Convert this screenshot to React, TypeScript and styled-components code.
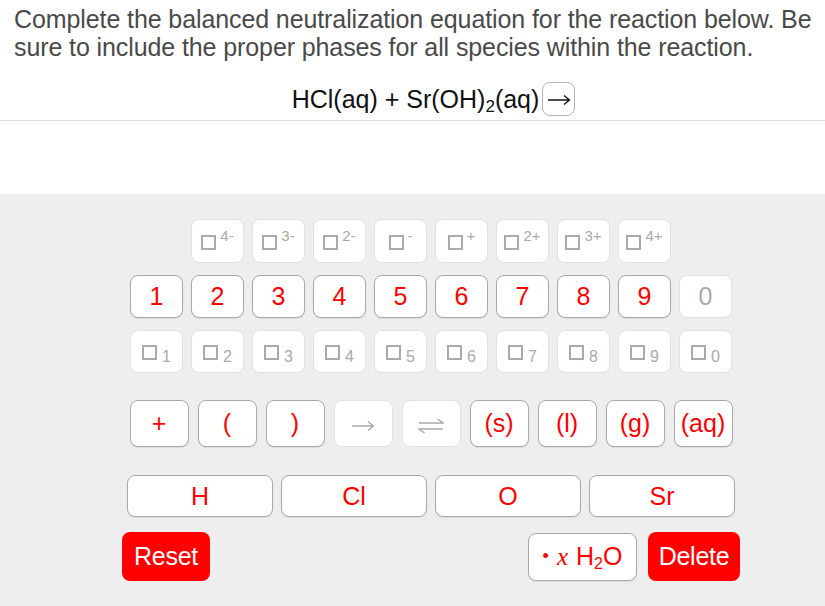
import React from "react";
import styled, { createGlobalStyle, css } from "styled-components";

const GlobalStyle = createGlobalStyle`
  html, body {
    margin: 0;
    padding: 0;
    background: #ffffff;
    font-family: "Liberation Sans", Arial, sans-serif;
  }
`;

const charges = ["4-", "3-", "2-", "-", "+", "2+", "3+", "4+"];
const digits = ["1", "2", "3", "4", "5", "6", "7", "8", "9", "0"];
const subs = ["1", "2", "3", "4", "5", "6", "7", "8", "9", "0"];
const elements = ["H", "Cl", "O", "Sr"];

const RightArrow = ({ color }: { color: string }) => (
  <svg width="24" height="12" viewBox="0 0 24 12" fill="none">
    <path d="M1 6 H22.5 M17 1.5 L22.5 6 L17 10.5" stroke={color} strokeWidth="1.4" />
  </svg>
);

const Equilibrium = () => (
  <svg width="26" height="16" viewBox="0 0 26 16" fill="none">
    <path d="M1 5 H25 L19.5 1" stroke="#aaaaaa" strokeWidth="1.4" />
    <path d="M25 11 H1 L6.5 15" stroke="#aaaaaa" strokeWidth="1.4" />
  </svg>
);

export default function App() {
  return (
    <>
      <GlobalStyle />
      <Page>
        <Header>
          <Prompt>
            Complete the balanced neutralization equation for the reaction below. Be
            sure to include the proper phases for all species within the reaction.
          </Prompt>
          <Equation>
            <span>
              HCl(aq) + Sr(OH)<EqSub>2</EqSub>(aq)
            </span>
            <ArrowBox>
              <RightArrow color="#111111" />
            </ArrowBox>
          </Equation>
        </Header>
        <Spacer />
        <Panel>
          <Keypad>
            <Row $gap={8}>
              {charges.map((c) => (
                <Key key={c} $w={53} $h={44} $off>
                  <Blank />
                  <Sup>{c}</Sup>
                </Key>
              ))}
            </Row>
            <Row $gap={8}>
              {digits.map((d) => (
                <Key key={d} $w={53} $h={43} $off={d === "0"}>
                  {d}
                </Key>
              ))}
            </Row>
            <Row $gap={8}>
              {subs.map((s) => (
                <Key key={s} $w={53} $h={43} $off>
                  <Blank />
                  <Sub>{s}</Sub>
                </Key>
              ))}
            </Row>
            <Row $gap={9} $top={27}>
              <Key $w={59} $h={47}>+</Key>
              <Key $w={59} $h={47}>(</Key>
              <Key $w={59} $h={47}>)</Key>
              <Key $w={59} $h={47} $off>
                <IconSlot>
                  <RightArrow color="#aaaaaa" />
                </IconSlot>
              </Key>
              <Key $w={59} $h={47} $off>
                <IconSlot>
                  <Equilibrium />
                </IconSlot>
              </Key>
              <Key $w={59} $h={47}>(s)</Key>
              <Key $w={59} $h={47}>(l)</Key>
              <Key $w={59} $h={47}>(g)</Key>
              <Key $w={59} $h={47}>(aq)</Key>
            </Row>
            <Row $gap={8} $top={28}>
              {elements.map((e) => (
                <Key key={e} $w={146} $h={42}>
                  {e}
                </Key>
              ))}
            </Row>
            <ActionRow>
              <RedButton $w={88}>Reset</RedButton>
              <RightGroup>
                <Key $w={109} $h={48}>
                  <Dot>•</Dot>
                  <Italic>x</Italic>
                  <span>
                    H<SmallSub>2</SmallSub>O
                  </span>
                </Key>
                <RedButton $w={92}>Delete</RedButton>
              </RightGroup>
            </ActionRow>
          </Keypad>
        </Panel>
      </Page>
    </>
  );
}

const Page = styled.div`
  width: 825px;
  height: 606px;
  display: flex;
  flex-direction: column;
  overflow: hidden;
`;

const Header = styled.div`
  border-bottom: 1px solid #dcdcdc;
  padding: 5px 0 4px 14px;
`;

const Prompt = styled.p`
  margin: 0;
  font-size: 25px;
  line-height: 28px;
  letter-spacing: -0.1px;
  color: #4a4a4a;
  width: 811px;
`;

const Equation = styled.div`
  display: flex;
  align-items: center;
  justify-content: center;
  margin-top: 21px;
  padding-left: 28px;
  font-size: 25px;
  color: #111;
  gap: 3px;
`;

const EqSub = styled.sub`
  font-size: 17px;
  vertical-align: -4px;
  line-height: 0;
`;

const ArrowBox = styled.span`
  display: inline-flex;
  align-items: center;
  justify-content: center;
  width: 33px;
  height: 34px;
  border: 1px solid #b5b5b5;
  border-radius: 8px;
  box-sizing: border-box;
  padding-top: 2px;
`;

const Spacer = styled.div`
  height: 73px;
`;

const Panel = styled.div`
  flex: 1;
  background: #eeeeee;
  padding-top: 25px;
`;

const Keypad = styled.div`
  width: 618px;
  margin-left: 122px;
  display: flex;
  flex-direction: column;
  gap: 12px;
`;

const Row = styled.div<{ $gap: number; $top?: number }>`
  display: flex;
  justify-content: center;
  gap: ${({ $gap }) => $gap}px;
  margin-top: ${({ $top }) => ($top ? $top - 12 : 0)}px;
`;

const Key = styled.div<{ $w: number; $h: number; $off?: boolean }>`
  width: ${({ $w }) => $w}px;
  height: ${({ $h }) => $h}px;
  box-sizing: border-box;
  display: flex;
  align-items: center;
  justify-content: center;
  gap: 5px;
  background: #ffffff;
  border-radius: 8px;
  font-size: 25px;
  color: #ff0000;
  border: 1px solid #a9a9a9;
  box-shadow: 0 1px 1px rgba(0, 0, 0, 0.08);
  ${({ $off }) =>
    $off &&
    css`
      border-color: #e2e2e2;
      box-shadow: none;
      color: #aaaaaa;
    `}
`;

const IconSlot = styled.span`
  display: flex;
  margin-top: 4px;
`;

const Blank = styled.span`
  width: 15px;
  height: 15px;
  border: 2px solid #aaaaaa;
  box-sizing: border-box;
  display: inline-block;
  margin-top: 2px;
`;

const Sup = styled.span`
  font-size: 15px;
  color: #aaaaaa;
  align-self: flex-start;
  margin-top: 7px;
  margin-left: -1px;
`;

const Sub = styled.span`
  font-size: 16px;
  color: #aaaaaa;
  align-self: flex-end;
  margin-bottom: 6px;
`;

const ActionRow = styled.div`
  display: flex;
  justify-content: space-between;
  align-items: center;
  margin-top: 3px;
`;

const RightGroup = styled.div`
  display: flex;
  align-items: center;
  gap: 11px;
`;

const RedButton = styled.div<{ $w: number }>`
  width: ${({ $w }) => $w}px;
  height: 49px;
  display: flex;
  align-items: center;
  justify-content: center;
  background: #ff0000;
  color: #ffffff;
  border-radius: 8px;
  font-size: 25px;
  letter-spacing: -0.3px;
`;

const Dot = styled.span`
  font-size: 18px;
  margin-right: 3px;
`;

const Italic = styled.span`
  font-family: "Liberation Serif", "DejaVu Serif", serif;
  font-style: italic;
  font-size: 25px;
  margin-right: 3px;
`;

const SmallSub = styled.sub`
  font-size: 16px;
  vertical-align: -4px;
  line-height: 0;
`;
